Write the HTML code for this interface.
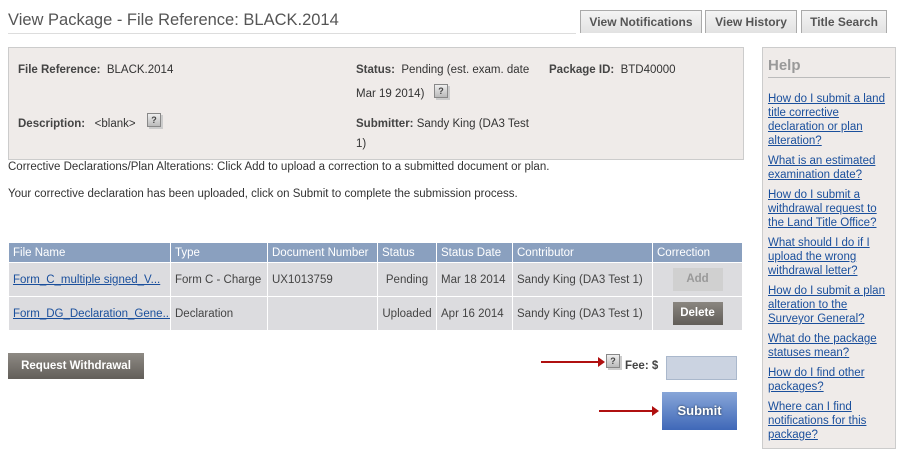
<!DOCTYPE html>
<html><head><style>
body{margin:0;width:900px;height:440px;overflow:hidden;background:#fff;font-family:"Liberation Sans",sans-serif;font-size:11.5px;color:#333;position:relative}
.a{position:absolute;white-space:nowrap}
.tab{position:absolute;top:10px;height:22px;background:linear-gradient(#f4f4f4,#e2e2e2);border:1px solid #aaa;border-bottom:none;font-weight:bold;color:#555;font-size:12px;line-height:23px;text-align:center}
.q{position:absolute;width:12px;height:12px;background:linear-gradient(#eee,#bbb);border:1px solid #888;box-shadow:2px 2px 0 #ccc;font-size:9px;font-weight:bold;line-height:12px;text-align:center;color:#444}
b{color:#444}
table{position:absolute;left:8px;top:242px;width:735px;border-collapse:collapse;font-size:11.5px;table-layout:fixed}
td,th{border:1px solid #fff;padding:0 4px;text-align:left;white-space:nowrap;overflow:hidden}
th{background:#8aa0bf;color:#fff;font-weight:normal;height:19px}
td{background:#dcdcdf;height:33px;color:#444}
a{color:#1a4f9c;text-decoration:underline}
.help a{display:block;margin-bottom:6px}
</style></head><body>
<div class="a" style="left:8px;top:11px;font-size:16.5px;color:#555">View Package - File Reference: BLACK.2014</div>
<div class="a" style="left:8px;top:33px;width:568px;height:1px;background:#ddd"></div>
<div class="tab" style="left:580px;width:120px">View Notifications</div>
<div class="tab" style="left:705px;width:90px">View History</div>
<div class="tab" style="left:801px;width:84px">Title Search</div>

<div class="a" style="left:8px;top:47px;width:734px;height:111px;background:#efebe9;border:1px solid #ccc"></div>
<div class="a" style="left:18px;top:64px"><b>File Reference:</b>&nbsp; BLACK.2014</div>
<div class="a" style="left:18px;top:118px"><b>Description:</b>&nbsp;&nbsp; &lt;blank&gt;</div>
<div class="q" style="left:147px;top:113px">?</div>
<div class="a" style="left:356px;top:64px"><b>Status:</b>&nbsp; Pending (est. exam. date</div>
<div class="a" style="left:356px;top:88px">Mar 19 2014)</div>
<div class="q" style="left:434px;top:84px">?</div>
<div class="a" style="left:549px;top:64px"><b>Package ID:</b>&nbsp; BTD40000</div>
<div class="a" style="left:356px;top:118px"><b>Submitter:</b> Sandy King (DA3 Test</div>
<div class="a" style="left:356px;top:138px">1)</div>

<div class="a" style="left:8px;top:161px">Corrective Declarations/Plan Alterations: Click Add to upload a correction to a submitted document or plan.</div>
<div class="a" style="left:8px;top:188px">Your corrective declaration has been uploaded, click on Submit to complete the submission process.</div>

<table>
<colgroup><col style="width:162px"><col style="width:97px"><col style="width:110px"><col style="width:59px"><col style="width:76px"><col style="width:140px"><col></colgroup>
<tr><th>File Name</th><th>Type</th><th>Document Number</th><th>Status</th><th>Status Date</th><th>Contributor</th><th>Correction</th></tr>
<tr><td><a>Form_C_multiple signed_V...</a></td><td>Form C - Charge</td><td>UX1013759</td><td style="text-align:center">Pending</td><td>Mar 18 2014</td><td>Sandy King (DA3 Test 1)</td><td style="text-align:center"><span style="display:inline-block;width:50px;height:23px;line-height:23px;background:#d0d0d0;color:#999;font-weight:bold">Add</span></td></tr>
<tr><td><a>Form_DG_Declaration_Gene...</a></td><td>Declaration</td><td></td><td style="text-align:center">Uploaded</td><td>Apr 16 2014</td><td>Sandy King (DA3 Test 1)</td><td style="text-align:center"><span style="display:inline-block;width:50px;height:23px;line-height:23px;background:linear-gradient(#8a8680,#615d58);color:#fff;font-weight:bold">Delete</span></td></tr>
</table>

<div class="a" style="left:8px;top:353px;width:136px;height:26px;background:linear-gradient(#8e8a84,#625e59);color:#fff;font-weight:bold;line-height:26px;text-align:center">Request Withdrawal</div>

<div class="a" style="left:541px;top:361px;width:58px;height:2px;background:#b01010"></div>
<div class="a" style="left:598px;top:357px;width:0;height:0;border-left:7px solid #b01010;border-top:5px solid transparent;border-bottom:5px solid transparent"></div>
<div class="q" style="left:606px;top:354px">?</div>
<div class="a" style="left:625px;top:360px;color:#444;font-weight:bold">Fee: $</div>
<div class="a" style="left:666px;top:356px;width:69px;height:22px;background:#cbd3e1;border:1px solid #aab8cc"></div>

<div class="a" style="left:599px;top:410px;width:54px;height:2px;background:#b01010"></div>
<div class="a" style="left:652px;top:406px;width:0;height:0;border-left:7px solid #b01010;border-top:5px solid transparent;border-bottom:5px solid transparent"></div>
<div class="a" style="left:662px;top:392px;width:75px;height:38px;background:linear-gradient(#88a6d8,#3f68b8);color:#fff;font-weight:bold;font-size:13px;line-height:38px;text-align:center;text-shadow:0 0 2px #234">Submit</div>

<div class="a" style="left:762px;top:47px;width:132px;height:400px;background:#efebe9;border:1px solid #ccc"></div>
<div class="a" style="left:768px;top:57px;font-size:15px;font-weight:bold;color:#999">Help</div>
<div class="a" style="left:768px;top:77px;width:122px;height:1px;background:#bbb"></div>
<div class="a help" style="left:768px;top:92px;font-size:11.5px;line-height:14px">
<a>How do I submit a land<br>title corrective<br>declaration or plan<br>alteration?</a>
<a>What is an estimated<br>examination date?</a>
<a>How do I submit a<br>withdrawal request to<br>the Land Title Office?</a>
<a>What should I do if I<br>upload the wrong<br>withdrawal letter?</a>
<a>How do I submit a plan<br>alteration to the<br>Surveyor General?</a>
<a>What do the package<br>statuses mean?</a>
<a>How do I find other<br>packages?</a>
<a>Where can I find<br>notifications for this<br>package?</a>
</div>
</body></html>
